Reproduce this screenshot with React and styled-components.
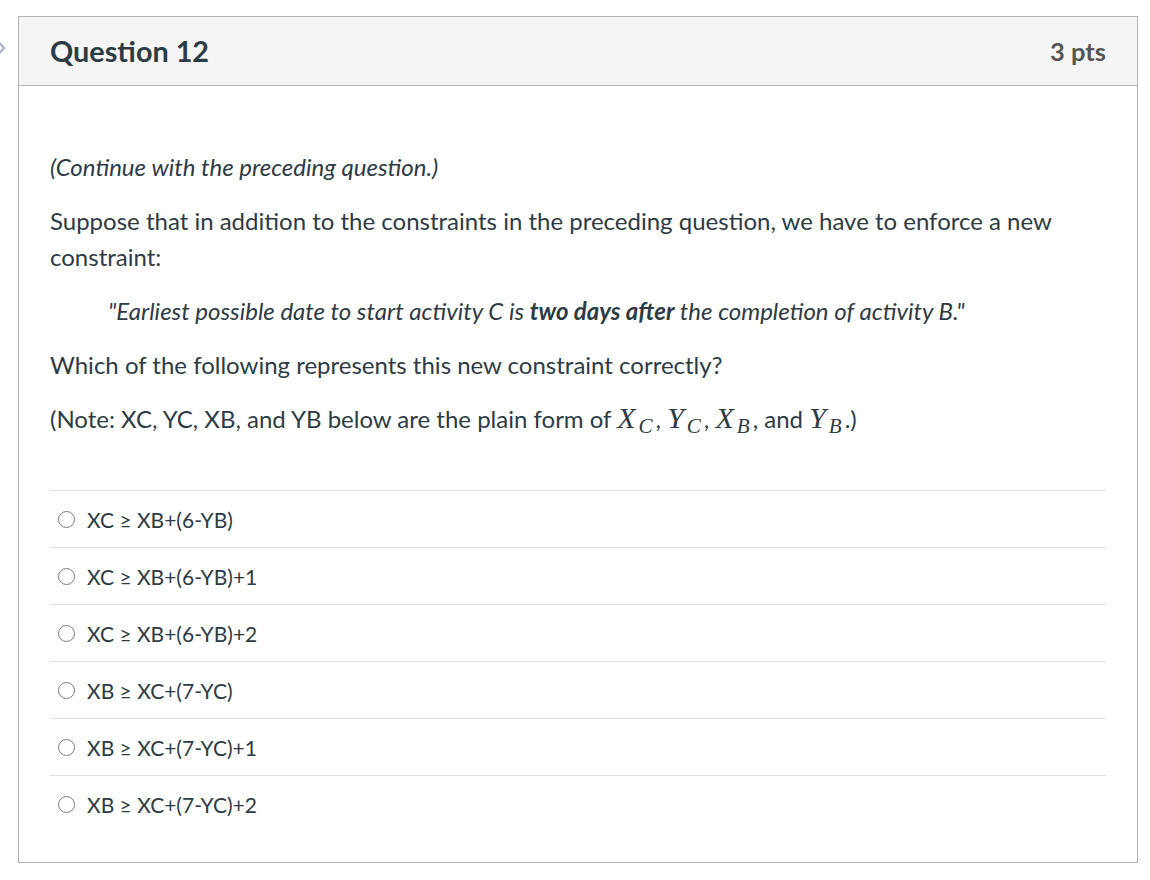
import React from "react";
import styled, { createGlobalStyle } from "styled-components";

const Global = createGlobalStyle`
  html, body { margin: 0; padding: 0; background: #fff; }
  body { font-family: Lato, "Open Sans", sans-serif; color: #2d3b45; }
`;

const Page = styled.div`
  position: relative;
  padding: 16px 13px 0 18px;
  width: 1150px;
  box-sizing: border-box;
`;

const Chevron = styled.svg`
  position: absolute;
  left: -4px;
  top: 38px;
`;

const Card = styled.div`
  width: 1120px;
  height: 847px;
  box-sizing: border-box;
  border: 1px solid #b4b4b4;
  display: flex;
  flex-direction: column;
`;

const Header = styled.div`
  height: 69px;
  box-sizing: border-box;
  background: #f5f5f5;
  border-bottom: 1px solid #b4b4b4;
  display: flex;
  align-items: center;
  justify-content: space-between;
  padding: 0 31px 0 31px;
`;

const Title = styled.h2`
  margin: 0;
  font-size: 28.8px;
  font-weight: 700;
  color: #2d3b45;
`;

const Points = styled.span`
  font-size: 25.5px;
  font-weight: 700;
  color: #555;
`;

const Body = styled.div`
  padding: 63px 31px 0 31px;
  font-size: 24px;
`;

const Para = styled.p`
  margin: 0 0 18px 0;
  line-height: 36px;
  font-style: ${(p) => (p.$italic ? "italic" : "normal")};
  padding-left: ${(p) => (p.$indent ? "58px" : "0")};
`;

const Math = styled.span`
  font-family: "Liberation Serif", "DejaVu Serif", serif;
  font-style: italic;
  font-size: 30px;
  line-height: 0;
  padding-right: 3px;
  sub {
    font-size: 21px;
    vertical-align: -5px;
    line-height: 0;
    margin-left: 3px;
  }
`;

const Answers = styled.div`
  margin-top: 53px;
  border-top: 1px solid #e0e0e0;
`;

const Answer = styled.label`
  display: flex;
  align-items: center;
  height: 56px;
  border-bottom: 1px solid ${(p) => (p.$last ? "transparent" : "#e0e0e0")};
  padding-left: 8px;
  font-size: 21px;
  color: #2d3b45;
`;

const Radio = styled.span`
  width: 17px;
  height: 17px;
  border-radius: 50%;
  border: 1.5px solid #7a7a7a;
  box-sizing: border-box;
  margin-right: 12px;
  flex: none;
`;

const M = ({ v, s }) => (
  <Math>
    {v}
    <sub>{s}</sub>
  </Math>
);

const options = [
  "XC ≥ XB+(6-YB)",
  "XC ≥ XB+(6-YB)+1",
  "XC ≥ XB+(6-YB)+2",
  "XB ≥ XC+(7-YC)",
  "XB ≥ XC+(7-YC)+1",
  "XB ≥ XC+(7-YC)+2",
];

export default function App() {
  return (
    <Page>
      <Global />
      <Chevron width="10" height="20" viewBox="0 0 10 20">
        <path d="M1 2 L8 10 L1 18" fill="none" stroke="#9fb3c4" strokeWidth="2" />
      </Chevron>
      <Card>
        <Header>
          <Title>Question 12</Title>
          <Points>3 pts</Points>
        </Header>
        <Body>
          <Para $italic>(Continue with the preceding question.)</Para>
          <Para>
            Suppose that in addition to the constraints in the preceding question, we have to enforce a new
            constraint:
          </Para>
          <Para $italic $indent>
            "Earliest possible date to start activity C is <b>two days after</b> the completion of activity B."
          </Para>
          <Para>Which of the following represents this new constraint correctly?</Para>
          <Para>
            (Note: XC, YC, XB, and YB below are the plain form of <M v="X" s="C" />, <M v="Y" s="C" />,{" "}
            <M v="X" s="B" />, and <M v="Y" s="B" />.)
          </Para>
          <Answers>
            {options.map((o, i) => (
              <Answer key={o} $last={i === options.length - 1}>
                <Radio />
                {o}
              </Answer>
            ))}
          </Answers>
        </Body>
      </Card>
    </Page>
  );
}
